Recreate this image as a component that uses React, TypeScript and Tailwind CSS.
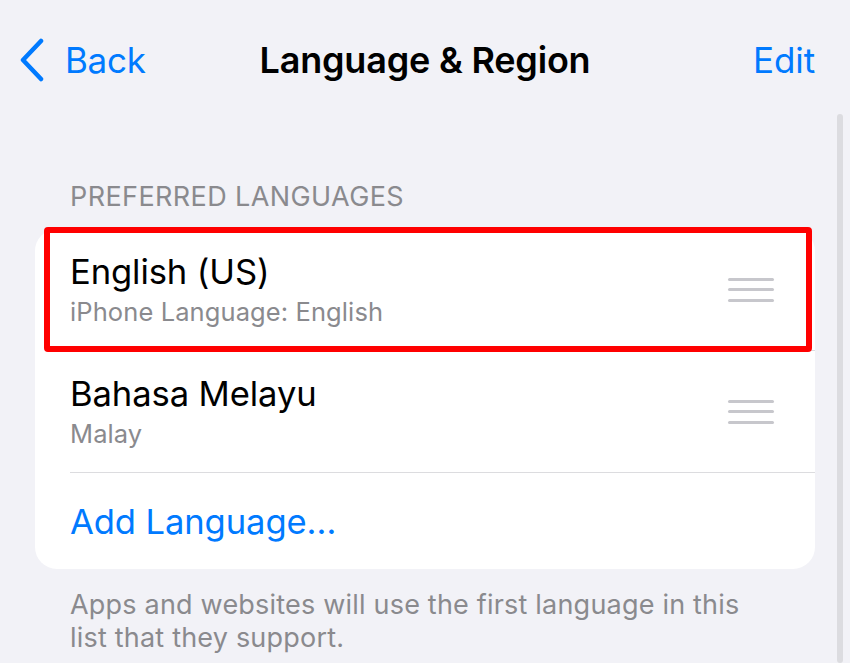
import { ChevronLeft } from 'lucide-react'

const languages = [
  { name: 'English (US)', detail: 'iPhone Language: English', marked: true },
  { name: 'Bahasa Melayu', detail: 'Malay', marked: false },
]

function DragHandle() {
  return (
    <div className="flex flex-col gap-[7.5px] w-[46px] shrink-0">
      <div className="h-[3px] rounded-full bg-[#c7c7cc]" />
      <div className="h-[3px] rounded-full bg-[#c7c7cc]" />
      <div className="h-[3px] rounded-full bg-[#c7c7cc]" />
    </div>
  )
}

export default function App() {
  return (
    <div className="relative w-[850px] h-[663px] overflow-hidden bg-[#f2f2f7] font-['Inter','Noto_Sans',sans-serif] antialiased">
      {/* 顶部导航 */}
      <div className="relative h-[120px] flex items-center justify-between pl-[18px] pr-[35px]">
        <div className="flex items-center gap-[19px] text-[#007aff]">
          <svg width="28" height="44" viewBox="0 0 28 44" fill="none">
            <path d="M23 3L5 22L23 41" stroke="#007aff" strokeWidth="4.5" strokeLinecap="round" strokeLinejoin="round" />
          </svg>
          <span className="text-[35px] leading-none tracking-[-0.3px]">Back</span>
        </div>
        <h1 className="absolute left-1/2 -translate-x-1/2 text-[36px] leading-none font-semibold tracking-[-0.2px] text-black whitespace-nowrap">
          Language &amp; Region
        </h1>
        <span className="text-[35px] leading-none text-[#007aff] tracking-[-0.1px]">Edit</span>
      </div>

      {/* 内容区 */}
      <div className="px-[35px]">
        <div className="pl-[35px] pt-[63px] pb-[19px] text-[27px] leading-none text-[#8a8a8e] tracking-[0.4px]">
          PREFERRED LANGUAGES
        </div>

        <div className="bg-white rounded-[22px]">
          {languages.map((lang) => (
            <div key={lang.name} className="relative pl-[35px]">
              <div className="flex items-center justify-between pr-[41px] h-[122px] border-b border-[#dcdcdf]">
                <div className="flex flex-col">
                  <span className="text-[34.6px] leading-[44px] text-black tracking-[-0.1px]">{lang.name}</span>
                  <span className="text-[25.5px] leading-[38px] text-[#8a8a8e] tracking-[0.1px]">{lang.detail}</span>
                </div>
                <DragHandle />
              </div>
              {lang.marked && (
                <div className="absolute left-[9px] right-[3px] -top-[2px] -bottom-[1px] border-[6px] border-[#ff0000] rounded-[4px]" />
              )}
            </div>
          ))}
          <div className="pl-[35px] h-[96px] flex items-center">
            <span className="text-[34.6px] leading-none text-[#007aff] tracking-[-0.1px]">Add Language…</span>
          </div>
        </div>

        <p className="pl-[35px] pr-[45px] pt-[19px] text-[27px] leading-[33px] text-[#8a8a8e] tracking-[0.2px]">
          Apps and websites will use the first language in this list that they support.
        </p>
      </div>

      {/* 滚动条 */}
      <div className="absolute left-[837px] top-[114px] bottom-0 w-[6px] rounded-full bg-[#dcdce0]" />
    </div>
  )
}
